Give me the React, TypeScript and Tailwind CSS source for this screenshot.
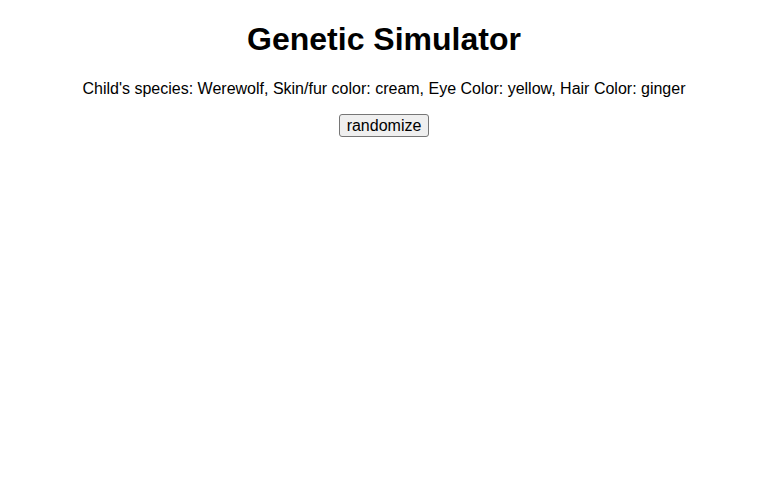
import React, { useState } from 'react';

const SPECIES = ['Werewolf', 'Vampire', 'Elf', 'Human', 'Dwarf'];
const SKIN = ['cream', 'pale', 'brown', 'grey', 'black'];
const EYES = ['yellow', 'blue', 'green', 'brown', 'red'];
const HAIR = ['ginger', 'blonde', 'black', 'brown', 'white'];

const pick = (list: string[]) => list[Math.floor(Math.random() * list.length)];

const App: React.FC = () => {
  const [child, setChild] = useState({
    species: 'Werewolf',
    skin: 'cream',
    eyes: 'yellow',
    hair: 'ginger',
  });

  const randomize = () => {
    setChild({
      species: pick(SPECIES),
      skin: pick(SKIN),
      eyes: pick(EYES),
      hair: pick(HAIR),
    });
  };

  return (
    <div className="min-h-screen bg-white text-black text-center font-['Liberation_Sans',Arial,sans-serif] leading-[normal]">
      <div className="pt-[21px]">
        <h1 className="text-[32px] font-bold leading-[37px]">Genetic Simulator</h1>
        <p className="mt-[22px] text-[16px] leading-[18px]">
          Child's species: {child.species}, Skin/fur color: {child.skin}, Eye Color: {child.eyes}, Hair Color: {child.hair}
        </p>
        <button
          onClick={randomize}
          className="mt-[16px] h-[23px] px-[7px] text-[16px] leading-[18px] bg-[#efefef] border border-[#767676] rounded-[3px] text-black"
        >
          randomize
        </button>
      </div>
    </div>
  );
};

export default App;
